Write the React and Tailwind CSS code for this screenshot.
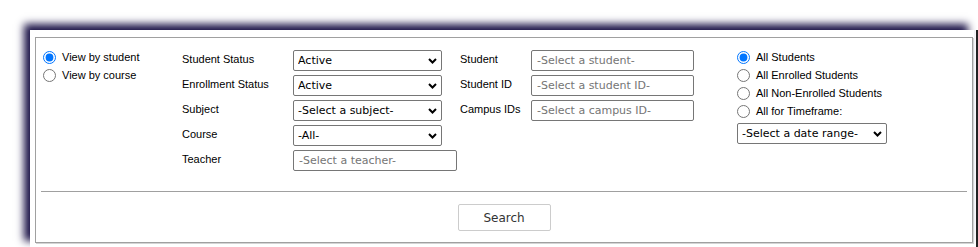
import React from 'react';

const labelFont = { fontFamily: '"Liberation Sans", Arial, sans-serif' };
const ctrlFont = { fontFamily: '"DejaVu Sans", Verdana, sans-serif' };

function Chevron() {
  return (
    <svg width="9" height="6" viewBox="0 0 9 6" className="absolute right-[5px] top-1/2 -translate-y-1/2 pointer-events-none">
      <polyline points="1,1 4.5,4.5 8,1" fill="none" stroke="#000" strokeWidth="2" />
    </svg>
  );
}

function Select({ value, width = 'w-[149px]' }) {
  return (
    <div className={`relative h-[21px] ${width}`}>
      <select
        defaultValue={value}
        style={ctrlFont}
        className="block appearance-none w-full h-full border border-[#767676] rounded-[2px] bg-white pl-[4px] pr-5 text-[11px] leading-[19px] text-black outline-none"
      >
        <option>{value}</option>
      </select>
      <Chevron />
    </div>
  );
}

function TextBox({ placeholder, width }) {
  return (
    <input
      type="text"
      placeholder={placeholder}
      style={ctrlFont}
      className={`block h-[21px] ${width} border border-[#767676] rounded-[2px] bg-white px-[5px] text-[11px] text-black placeholder:text-[#757575] outline-none`}
    />
  );
}

function Radio({ name, label, checked }) {
  return (
    <label className="flex items-center h-[18px] gap-[6px] text-[11px] text-black" style={labelFont}>
      <input type="radio" name={name} defaultChecked={checked} className="m-0 w-[13px] h-[13px]" />
      <span>{label}</span>
    </label>
  );
}

function Row({ label, children, labelWidth }) {
  return (
    <div className="flex items-center h-[21px]">
      <span className={`${labelWidth} text-[11px] text-black -mt-[2px]`} style={labelFont}>{label}</span>
      {children}
    </div>
  );
}

export default function App() {
  return (
    <div className="w-[978px] h-[247px] overflow-hidden bg-white pl-[30px] pt-[30px] flex">
      <div className="w-[944px] h-[217px] bg-white shadow-[-6px_-6px_8px_#1b1347] pl-[5px] pt-[7px]">
        <div className="w-[938px] h-[206px] border border-[#a0a0a0] shadow-[1px_1px_0_#d4d4d4] flex flex-col">
          {/* filters */}
          <div className="h-[153px] flex">
            <div className="w-[146px] pl-[7px] pt-[10px] flex flex-col">
              <Radio name="view" label="View by student" checked />
              <Radio name="view" label="View by course" />
            </div>

            <div className="w-[278px] pt-[12px] flex flex-col gap-[4px]">
              <Row label="Student Status" labelWidth="w-[111px]"><Select value="Active" /></Row>
              <Row label="Enrollment Status" labelWidth="w-[111px]"><Select value="Active" /></Row>
              <Row label="Subject" labelWidth="w-[111px]"><Select value="-Select a subject-" /></Row>
              <Row label="Course" labelWidth="w-[111px]"><Select value="-All-" /></Row>
              <Row label="Teacher" labelWidth="w-[111px]"><TextBox placeholder="-Select a teacher-" width="w-[164px]" /></Row>
            </div>

            <div className="w-[277px] pt-[12px] flex flex-col gap-[4px]">
              <Row label="Student" labelWidth="w-[71px]"><TextBox placeholder="-Select a student-" width="w-[163px]" /></Row>
              <Row label="Student ID" labelWidth="w-[71px]"><TextBox placeholder="-Select a student ID-" width="w-[163px]" /></Row>
              <Row label="Campus IDs" labelWidth="w-[71px]"><TextBox placeholder="-Select a campus ID-" width="w-[163px]" /></Row>
            </div>

            <div className="pt-[10px] flex flex-col">
              <Radio name="scope" label="All Students" checked />
              <Radio name="scope" label="All Enrolled Students" />
              <Radio name="scope" label="All Non-Enrolled Students" />
              <Radio name="scope" label="All for Timeframe:" />
              <div className="mt-[3px]">
                <Select value="-Select a date range-" width="w-[150px]" />
              </div>
            </div>
          </div>

          <div className="mx-[5px] h-px bg-[#a0a0a0]" />

          <div className="flex justify-center pt-[12px]">
            <button
              style={ctrlFont}
              className="w-[93px] h-[27px] border border-[#cccccc] rounded-[2px] bg-white text-[12px] text-[#333]"
            >
              Search
            </button>
          </div>
        </div>
      </div>
      <div className="ml-[2px] w-[2px] bg-[#222]" />
    </div>
  );
}
